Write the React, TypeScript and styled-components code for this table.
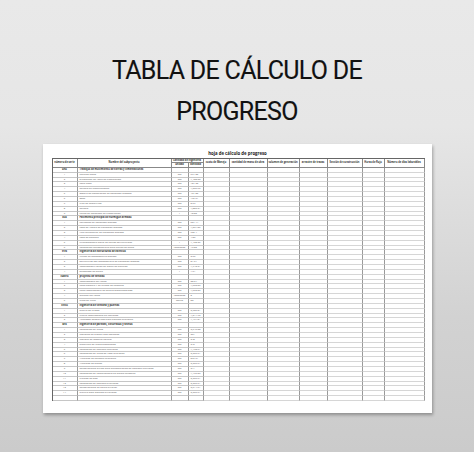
import React from "react";
import styled, { createGlobalStyle } from "styled-components";

const GlobalStyle = createGlobalStyle`
  html, body {
    margin: 0;
    padding: 0;
  }
  body {
    font-family: "Open Sans", "Liberation Sans", sans-serif;
  }
  table, th, td {
    font-family: "Open Sans", "Liberation Sans", sans-serif;
  }
`;

const Page = styled.div`
  width: 474px;
  height: 452px;
  overflow: hidden;
  background: linear-gradient(180deg, #e9e9e9 0%, #e6e6e6 28%, #d2d2d2 70%, #cbcbcb 100%);
  display: flex;
  flex-direction: column;
  align-items: center;
`;

const Title = styled.h1`
  margin: 50px 0 0;
  font-family: Roboto, "Liberation Sans", sans-serif;
  font-weight: 400;
  font-size: 25px;
  line-height: 41px;
  letter-spacing: -0.7px;
  color: #111;
  text-align: center;
  -webkit-text-stroke: 0.12px #111;
`;

const Paper = styled.div`
  margin-top: 12px;
  width: 389px;
  height: 269px;
  box-sizing: border-box;
  background: #fff;
  padding: 5px 8px 0 9px;
  box-shadow: 1px 2px 3px rgba(0, 0, 0, 0.3);
  display: flex;
  flex-direction: column;
  font-family: "Open Sans", "Liberation Sans", sans-serif;
`;

const SheetTitle = styled.div`
  height: 9px;
  line-height: 8px;
  font-size: 4.3px;
  font-weight: 700;
  text-align: center;
  color: #222;
`;

const Table = styled.table`
  width: 372px;
  table-layout: fixed;
  border-collapse: separate;
  border-spacing: 0;
  border-top: 1px solid #666;
  border-left: 1px solid #666;
  box-sizing: border-box;
`;

const HeadCell = styled.th`
  padding: 0;
  font-size: 2.5px;
  line-height: 3.4px;
  font-weight: 700;
  color: #333;
  text-align: center;
  white-space: nowrap;
  overflow: hidden;
  border-right: 1px solid #888;
  border-bottom: 1px solid #888;
`;

const Row = styled.tr`
  height: 4.86px;
`;

const Cell = styled.td<{ $align?: string; $bold?: boolean; $empty?: boolean }>`
  padding: 0 0 0 ${(p) => (p.$align === "left" ? "2px" : "0")};
  height: 3.86px;
  font-size: 2.5px;
  line-height: 3.86px;
  font-weight: ${(p) => (p.$bold ? 700 : 400)};
  color: ${(p) => (p.$bold ? "#333" : "#555")};
  text-align: ${(p) => p.$align || "center"};
  white-space: nowrap;
  overflow: hidden;
  border-right: 1px solid #9a9a9a;
  border-bottom: 1px solid ${(p) => (p.$empty ? "#d6d6d6" : "#c6c6c6")};
`;

const widths = [25, 94, 17, 15, 26, 38, 32, 28, 35, 22, 40];

const headers = [
  "costo de Manejo",
  "cantidad de mano de obra",
  "volumen de generación",
  "arrastre de trazas",
  "Sección de construcción",
  "Horas de flujo",
  "Número de días laborables",
];

type Item = [string, string, string, string];

const sections: { id: string; name: string; items: Item[] }[] = [
  {
    id: "uno",
    name: "Trabajos de movimiento de tierras y cimentaciones",
    items: [
      ["1", "Terreno plano", "m2", "574.00"],
      ["2", "Excavación de zanja de cimentación", "m3", "1,408.00"],
      ["3", "Cojín base", "m3", "184.90"],
      ["4", "Relleno en cimentaciones", "m3", "1,025.62"],
      ["5", "Zapata de cimentación de hormigón armado", "m3", "491.82"],
      ["6", "Base", "m3", "175.61"],
      ["7", "Pilar de geotextiles", "m3", "8.67"],
      ["8", "Relleno", "m3", "1,889.21"],
      ["9", "Lecho de hormigón de cimentación", "t", "18.80"],
    ],
  },
  {
    id: "dos",
    name: "Pavimento principal de hormigón armado",
    items: [
      ["1", "Columnas de hormigón armado", "m3", "604.44"],
      ["2", "Losa de zapata de hormigón armado", "m3", "1,091.85"],
      ["3", "Viga rectangular de hormigón armado", "m3", "725.4"],
      ["4", "Losa de escalera", "m2", "4.85"],
      ["5", "Principalmente acero de barras estructurales", "t", "1,498.26"],
      ["6", "Colocación reglamentaria para barras de acero", "toneladas", "19.80"],
    ],
  },
  {
    id: "tres",
    name: "Ingeniería de estructuras de edificios",
    items: [
      ["1", "Muros de mampostería armada", "m3", "3.66"],
      ["2", "Estructuras con mampostería de hormigón armado", "m3", "81.51"],
      ["3", "Impermeabilización de pared de edificios", "m2", "1,743.21"],
      ["4", "Enfoscado de pared", "t", "1.51"],
    ],
  },
  {
    id: "cuatro",
    name: "proyecto de tendido",
    items: [
      ["1", "Impermeable del techo", "m2", "38.24"],
      ["2", "Capa aislante y de relleno de cemento", "m2", "1,650.89"],
      ["3", "Capa impermeable de asfalto modificado SBS", "m2", "1,650.89"],
      ["4", "Drenaje del techo", "toneladas", "8"],
      ["5", "Tubo de lluvia", "metro", "80"],
    ],
  },
  {
    id: "cinco",
    name: "Ingeniería de ventana y puertas",
    items: [
      ["1", "puerta de la casa", "m2", "2,706.81"],
      ["2", "Puerta impermeable en ventanas", "m2", "1,011.72"],
      ["3", "Acabados decorativos para paredes interiores", "m2", "1,171.81"],
    ],
  },
  {
    id: "seis",
    name: "Ingeniería de paredes, cielorrasos y techos",
    items: [
      ["1", "Colocación de techo", "m2", "2,545.88"],
      ["2", "Tabiques de placas yeso laminado", "m2", "251"],
      ["3", "Tabique de madera/tablero", "m2", "248"],
      ["4", "superficie de techo suspendido", "m2", "246"],
      ["5", "Colocación de paredes interiores", "m2", "1,178.51"],
      ["6", "Colocación de techo de yeso interiores", "m2", "2,965.51"],
      ["7", "Alicatado de paredes interiores", "m2", "877.51"],
      ["8", "Alicatado de suelos", "m2", "2,965.51"],
      ["9", "Revestimiento pulido para pavimentación de paredes interiores", "m2", "211"],
      ["10", "Colocación de revestimiento de piedra cerámica", "m2", "1,176.89"],
      ["11", "Pintado de piso", "m2", "2,965.51"],
      ["12", "Colocación de paredes exteriores", "m2", "2,965.51"],
      ["13", "Revestimiento de pared exterior", "m2", "2,514.51"],
      ["14", "pintura para paredes exteriores", "m2", "2,965.51"],
    ],
  },
];

const EmptyCells = () => (
  <>
    {headers.map((h) => (
      <Cell key={h} $empty />
    ))}
  </>
);

export default function App() {
  return (
    <>
      <GlobalStyle />
      <Page>
        <Title>
          TABLA DE CÁLCULO DE
          <br />
          PROGRESO
        </Title>
        <Paper>
          <SheetTitle>hoja de cálculo de progreso</SheetTitle>
          <Table>
            <colgroup>
              {widths.map((w, i) => (
                <col key={i} style={{ width: w }} />
              ))}
            </colgroup>
            <thead>
              <tr style={{ height: 4 }}>
                <HeadCell rowSpan={2}>número de serie</HeadCell>
                <HeadCell rowSpan={2}>Nombre del subproyecto</HeadCell>
                <HeadCell colSpan={2}>Cantidad de ingeniería</HeadCell>
                {headers.map((h) => (
                  <HeadCell key={h} rowSpan={2}>
                    {h}
                  </HeadCell>
                ))}
              </tr>
              <tr style={{ height: 4 }}>
                <HeadCell>unidad</HeadCell>
                <HeadCell>cantidad</HeadCell>
              </tr>
            </thead>
            <tbody>
              {sections.map((s) => (
                <React.Fragment key={s.id}>
                  <Row>
                    <Cell $bold>{s.id}</Cell>
                    <Cell $bold $align="left">
                      {s.name}
                    </Cell>
                    <Cell />
                    <Cell />
                    <EmptyCells />
                  </Row>
                  {s.items.map((it) => (
                    <Row key={s.id + it[0]}>
                      <Cell>{it[0]}</Cell>
                      <Cell $align="left">{it[1]}</Cell>
                      <Cell>{it[2]}</Cell>
                      <Cell $align="left">{it[3]}</Cell>
                      <EmptyCells />
                    </Row>
                  ))}
                </React.Fragment>
              ))}
              <Row>
                <Cell />
                <Cell />
                <Cell />
                <Cell />
                <EmptyCells />
              </Row>
            </tbody>
          </Table>
        </Paper>
      </Page>
    </>
  );
}
